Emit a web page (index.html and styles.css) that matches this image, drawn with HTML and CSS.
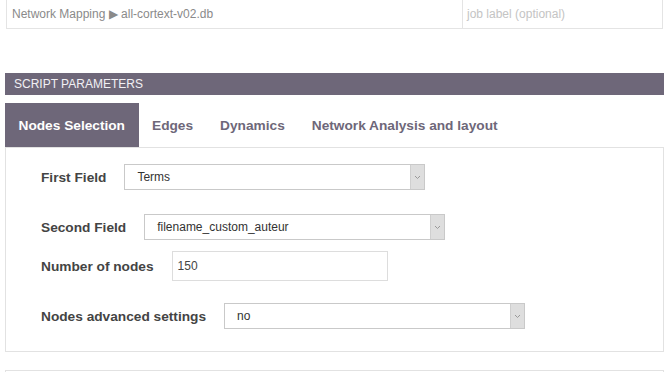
FILE: index.html
```html
<!DOCTYPE html>
<html>
<head>
<meta charset="utf-8">
<link rel="stylesheet" href="styles.css">
</head>
<body>
<div class="jobbar">
  <div class="jobpath">Network Mapping ▶ all-cortext-v02.db</div>
  <div class="joblabel">job label (optional)</div>
</div>

<div class="section-head">SCRIPT PARAMETERS</div>

<div class="tabs">
  <div class="tab active">Nodes Selection</div>
  <div class="tab">Edges</div>
  <div class="tab">Dynamics</div>
  <div class="tab">Network Analysis and layout</div>
</div>

<div class="panel">
  <div class="row r1">
    <div class="label">First Field</div>
    <div class="select"><span class="val">Terms</span><span class="arrow"><svg width="7" height="5" viewBox="0 0 7 5"><polyline points="1,1 3.5,3.5 6,1" fill="none" stroke="#999" stroke-width="1"/></svg></span></div>
  </div>
  <div class="row r2">
    <div class="label">Second Field</div>
    <div class="select"><span class="val">filename_custom_auteur</span><span class="arrow"><svg width="7" height="5" viewBox="0 0 7 5"><polyline points="1,1 3.5,3.5 6,1" fill="none" stroke="#999" stroke-width="1"/></svg></span></div>
  </div>
  <div class="row r3">
    <div class="label">Number of nodes</div>
    <div class="input">150</div>
  </div>
  <div class="row r4">
    <div class="label">Nodes advanced settings</div>
    <div class="select"><span class="val">no</span><span class="arrow"><svg width="7" height="5" viewBox="0 0 7 5"><polyline points="1,1 3.5,3.5 6,1" fill="none" stroke="#999" stroke-width="1"/></svg></span></div>
  </div>
</div>

<div class="next-box"></div>
</body>
</html>
```

FILE: styles.css
```css
* { box-sizing: border-box; }
html, body { margin: 0; padding: 0; background: #fff; }
body {
  font-family: "Liberation Sans", Arial, sans-serif;
  width: 672px;
  height: 372px;
  overflow: hidden;
}

.jobbar {
  display: flex;
  margin: -1px 0 0 6px;
  width: 657px;
  height: 30px;
}
.jobpath {
  width: 457px;
  border: 1px solid #e4e4e4;
  padding: 0 0 0 5px;
  display: flex;
  align-items: center;
  font-size: 12px;
  color: #8a8a8a;
}
.joblabel {
  flex: 1;
  border: 1px solid #e4e4e4;
  border-left: none;
  padding: 0 0 0 4px;
  display: flex;
  align-items: center;
  font-size: 12px;
  color: #c4c4c4;
}

.section-head {
  margin: 44px 0 0 5px;
  width: 659px;
  height: 22px;
  background: #6e6779;
  color: #f2f0f4;
  font-size: 12px;
  padding-left: 9px;
  display: flex;
  align-items: center;
}

.tabs {
  display: flex;
  margin: 8px 0 0 5px;
  height: 44px;
}
.tab {
  padding: 0 13.5px;
  display: flex;
  align-items: center;
  font-size: 13.7px;
  font-weight: bold;
  color: #6e6779;
}
.tab.active {
  background: #6e6779;
  color: #fff;
}

.panel {
  margin-left: 5px;
  width: 659px;
  height: 205px;
  border: 1px solid #e2e2e2;
  padding: 16px 0 0 35px;
  display: flex;
  flex-direction: column;
}
.row {
  display: flex;
  align-items: center;
  gap: 18px;
}
.r2 { margin-top: 24px; }
.r3 { margin-top: 11px; }
.r4 { margin-top: 22px; }

.label {
  font-size: 13.7px;
  font-weight: bold;
  color: #444;
}

.select {
  width: 301px;
  height: 26px;
  border: 1px solid #c9c9c9;
  display: flex;
  font-size: 12px;
  color: #333;
}
.select .val {
  flex: 1;
  padding-left: 12px;
  display: flex;
  align-items: center;
}
.select .arrow {
  width: 14px;
  background: #dedede;
  border-left: 1px solid #cfcfcf;
  display: flex;
  align-items: center;
  justify-content: center;
}

.input {
  width: 216px;
  height: 30px;
  border: 1px solid #dddddd;
  padding-left: 5px;
  display: flex;
  align-items: center;
  font-size: 12px;
  color: #444;
}

.next-box {
  margin: 18px 0 0 5px;
  width: 659px;
  height: 20px;
  border: 1px solid #e2e2e2;
}
```
